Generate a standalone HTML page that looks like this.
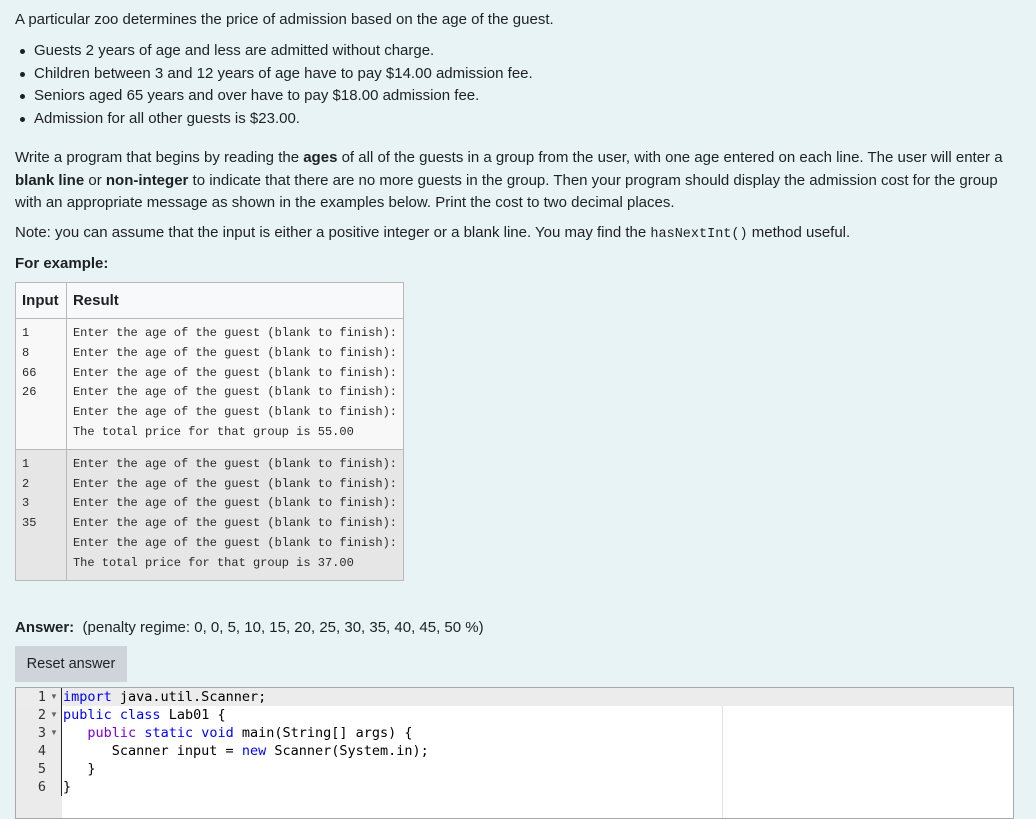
<!DOCTYPE html>
<html><head><meta charset="utf-8"><style>
body{margin:0;background:#e7f3f5;width:1036px;height:808px;overflow:hidden;font-family:"Liberation Sans",sans-serif;font-size:15px;color:#1d2125;position:relative}
.t{position:absolute;white-space:nowrap;line-height:20px}
b{font-weight:bold}
.dot{position:absolute;width:5px;height:5px;border-radius:50%;background:#1d2125}
.mono{font-family:"Liberation Mono","DejaVu Sans Mono",monospace}
table{position:absolute;left:15px;top:282px;border-collapse:collapse;width:389px}
td,th{border:1px solid #b8b8b8;vertical-align:top;padding:0 6px}
th{background:#f8f9fa;text-align:left;height:35px;font-size:15px;font-weight:bold;line-height:35px}
.r1{background:#f8f8f8}.r2{background:#e6e6e6}
td{font-family:"Liberation Mono",monospace;font-size:12px;line-height:19.8px;padding-top:5px;padding-bottom:6px;color:#2a2a2a;white-space:nowrap}
td.in{width:38px;padding-left:6px}
.btn{position:absolute;left:15px;top:646px;width:112px;height:36px;background:#ced4da;color:#1d2125;line-height:36px;text-align:center;font-size:14.5px}
.ed{position:absolute;left:15px;top:687px;width:997px;height:130px;border:1px solid #a8a8a8;background:#fff}
.gut{position:absolute;left:0;top:0;width:46px;height:130px;background:#ebebeb}
.hl{position:absolute;left:0;top:0;width:997px;height:18px;background:#ececec}
.code{position:absolute;left:47px;top:0;font-family:"DejaVu Sans Mono","Liberation Mono",monospace;font-size:13.5px;line-height:18px;white-space:pre;color:#000}
.num{position:absolute;left:0;width:30px;text-align:right;font-family:"DejaVu Sans Mono",monospace;font-size:13.5px;line-height:18px;color:#333}
.k{color:#0000ff}.k2{color:#7a00e0}
</style></head><body>
<div class="t" style="left:15px;top:10px">A particular zoo determines the price of admission based on the age of the guest.</div>
<div class="dot" style="left:20px;top:49px"></div><div class="t" style="left:34px;top:41px">Guests 2 years of age and less are admitted without charge.</div>
<div class="dot" style="left:20px;top:72px"></div><div class="t" style="left:34px;top:64px">Children between 3 and 12 years of age have to pay $14.00 admission fee.</div>
<div class="dot" style="left:20px;top:94px"></div><div class="t" style="left:34px;top:86px">Seniors aged 65 years and over have to pay $18.00 admission fee.</div>
<div class="dot" style="left:20px;top:117px"></div><div class="t" style="left:34px;top:109px">Admission for all other guests is $23.00.</div>
<div class="t" style="left:15px;top:148px">Write a program that begins by reading the <b>ages</b> of all of the guests in a group from the user, with one age entered on each line. The user will enter a</div>
<div class="t" style="left:15px;top:171px"><b>blank line</b> or <b>non-integer</b> to indicate that there are no more guests in the group. Then your program should display the admission cost for the group</div>
<div class="t" style="left:15px;top:193px">with an appropriate message as shown in the examples below. Print the cost to two decimal places.</div>
<div class="t" style="left:15px;top:223px">Note: you can assume that the input is either a positive integer or a blank line. You may find the <span class="mono" style="font-size:13.5px">hasNextInt()</span> method useful.</div>
<div class="t" style="left:15px;top:254px"><b>For example:</b></div>
<table>
<tr><th style="width:38px">Input</th><th>Result</th></tr>
<tr class="r1"><td class="in">1<br>8<br>66<br>26</td><td>Enter the age of the guest (blank to finish):<br>Enter the age of the guest (blank to finish):<br>Enter the age of the guest (blank to finish):<br>Enter the age of the guest (blank to finish):<br>Enter the age of the guest (blank to finish):<br>The total price for that group is 55.00</td></tr>
<tr class="r2"><td class="in">1<br>2<br>3<br>35</td><td>Enter the age of the guest (blank to finish):<br>Enter the age of the guest (blank to finish):<br>Enter the age of the guest (blank to finish):<br>Enter the age of the guest (blank to finish):<br>Enter the age of the guest (blank to finish):<br>The total price for that group is 37.00</td></tr>
</table>
<div class="t" style="left:15px;top:618px"><b>Answer:</b>&nbsp; (penalty regime: 0, 0, 5, 10, 15, 20, 25, 30, 35, 40, 45, 50 %)</div>
<div class="btn">Reset answer</div>
<div class="ed">
<div class="gut"></div><div class="hl"></div>
<div style="position:absolute;left:706px;top:18px;width:1px;height:112px;background:#e2e2e2"></div>
<div style="position:absolute;left:45px;top:0;width:1px;height:108px;background:#222"></div>
<div class="num" style="top:0">1</div><div class="num" style="top:18px">2</div><div class="num" style="top:36px">3</div><div class="num" style="top:54px">4</div><div class="num" style="top:72px">5</div><div class="num" style="top:90px">6</div>
<div style="position:absolute;left:34px;top:0;font-size:8px;line-height:18px;color:#666">▼<br>▼<br>▼</div>
<div class="code"><span class="k">import</span> java.util.Scanner;
<span class="k">public</span> <span class="k">class</span> Lab01 {
   <span class="k2">public</span> <span class="k">static</span> <span class="k">void</span> main(String[] args) {
      Scanner input = <span class="k">new</span> Scanner(System.in);
   }
}</div>
</div>
</body></html>
